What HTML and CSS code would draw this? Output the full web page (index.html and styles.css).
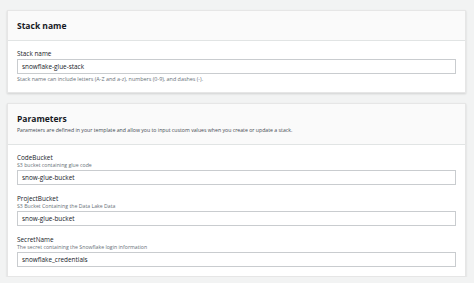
FILE: index.html
```html
<!DOCTYPE html>
<html lang="en">

<head>
  <meta charset="UTF-8" />
  <meta name="viewport" content="width=device-width, initial-scale=1.0" />
  <title>Specify stack details</title>
  <link rel="stylesheet" href="styles.css">
</head>

<body>
  <div class="page">
    <div class="panel">
      <div class="panel-header">
        <h2>Stack name</h2>
      </div>
      <div class="panel-body">
        <div class="field">
          <label>Stack name</label>
          <div class="input">snowflake-glue-stack</div>
          <p class="hint">Stack name can include letters (A-Z and a-z), numbers (0-9), and dashes (-).</p>
        </div>
      </div>
    </div>

    <div class="panel">
      <div class="panel-header">
        <h2>Parameters</h2>
        <p class="desc">Parameters are defined in your template and allow you to input custom values when you create or update a stack.</p>
      </div>
      <div class="panel-body">
        <div class="field">
          <label>CodeBucket</label>
          <p class="sub">S3 bucket containing glue code</p>
          <div class="input">snow-glue-bucket</div>
        </div>
        <div class="field">
          <label>ProjectBucket</label>
          <p class="sub">S3 Bucket Containing the Data Lake Data</p>
          <div class="input">snow-glue-bucket</div>
        </div>
        <div class="field">
          <label>SecretName</label>
          <p class="sub">The secret containing the Snowflake login information</p>
          <div class="input">snowflake_credentials</div>
        </div>
      </div>
    </div>
  </div>
</body>

</html>
```

FILE: styles.css
```css
:root {
  --page-bg: #f2f3f3;
  --header-bg: #fafafa;
  --line: #e1e4e4;
  --text: #16191f;
  --muted: #687078;
}

body {
  margin: 0;
  background: var(--page-bg);
  font-family: 'Open Sans', 'Noto Sans', sans-serif;
  color: var(--text);
}

.page {
  padding: 10px 8px 0 7px;
  display: flex;
  flex-direction: column;
  gap: 10px;
}

.panel {
  background: #fff;
  border: 1px solid #e6e6e6;
  box-shadow: 0 1px 2px rgba(0, 0, 0, 0.14);
}

.panel-header {
  background: var(--header-bg);
  border-bottom: 1px solid var(--line);
  padding: 9px 9px 8px;
}

.panel-header h2 {
  margin: 0;
  font-size: 8.5px;
  font-weight: 700;
  line-height: 12px;
}

.desc {
  margin: 2px 0 2px;
  font-size: 5.2px;
  line-height: 7px;
  color: #444b52;
}

.panel-body {
  padding: 8px 9px 9px;
  display: flex;
  flex-direction: column;
  gap: 9px;
}

label {
  display: block;
  font-size: 6.4px;
  line-height: 9px;
}

.sub {
  margin: 0 0 1px;
  font-size: 5.2px;
  line-height: 7px;
  color: var(--muted);
}

.input {
  margin-top: 1px;
  height: 13px;
  border: 1px solid #c9cccf;
  padding: 0 4px;
  font-size: 6.4px;
  line-height: 13px;
  background: #fff;
}

.hint {
  margin: 2px 0 0;
  font-size: 5.4px;
  line-height: 7px;
  color: var(--muted);
}
```
